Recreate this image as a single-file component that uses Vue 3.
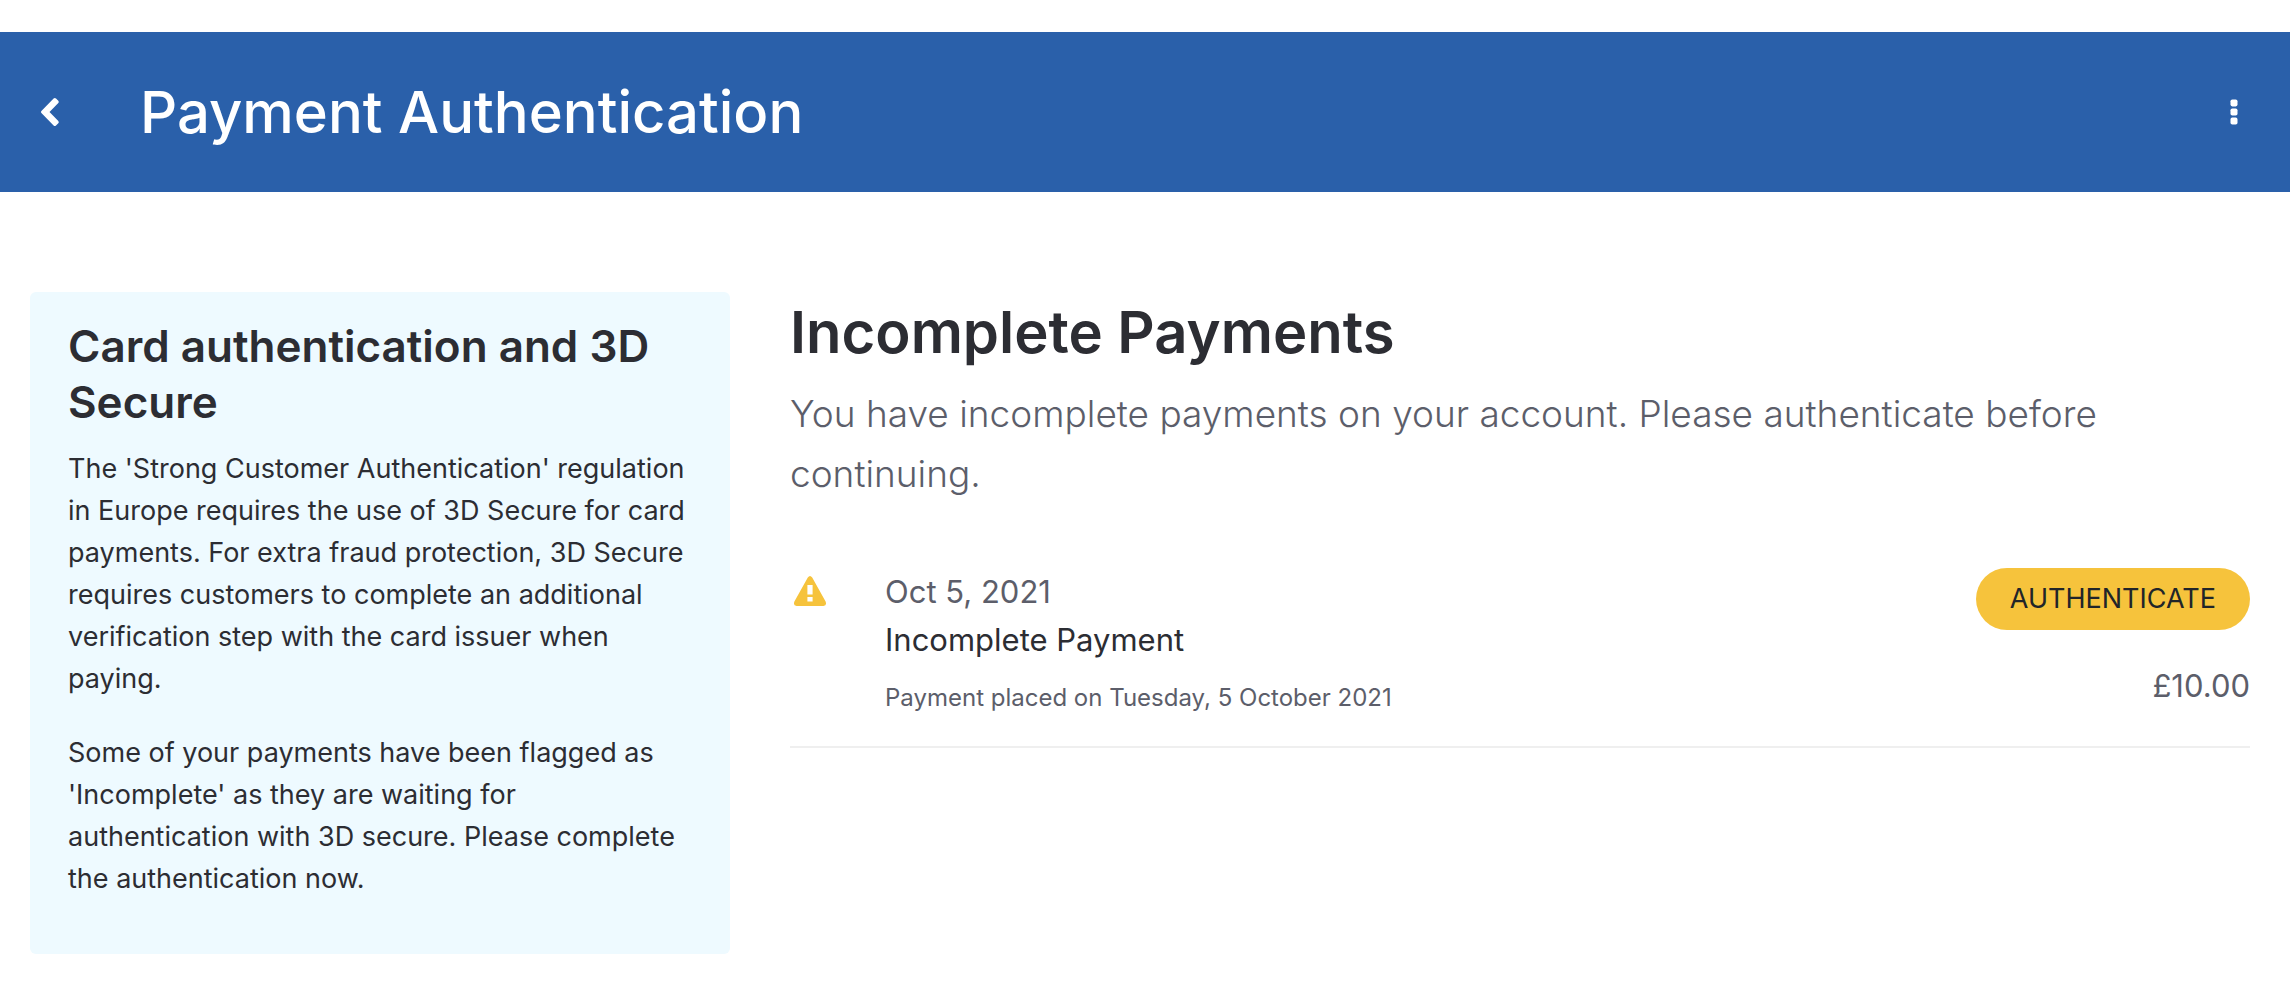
<script setup>
const notes = [
  "The 'Strong Customer Authentication' regulation in Europe requires the use of 3D Secure for card payments. For extra fraud protection, 3D Secure requires customers to complete an additional verification step with the card issuer when paying.",
  "Some of your payments have been flagged as 'Incomplete' as they are waiting for authentication with 3D secure. Please complete the authentication now.",
]

const payments = [
  {
    id: 1,
    date: 'Oct 5, 2021',
    title: 'Incomplete Payment',
    detail: 'Payment placed on Tuesday, 5 October 2021',
    amount: '£10.00',
  },
]
</script>

<template>
  <div class="page">
    <header class="topbar">
      <button class="icon-button back" type="button" aria-label="Back">
        <svg width="20" height="30" viewBox="0 0 20 30" aria-hidden="true">
          <path
            d="M1.4 13.9 L13.6 1.4 Q14.8 0.4 16 1.4 L18.3 3.7 Q19.4 4.9 18.3 6.1 L9.5 15 L18.3 23.9 Q19.4 25.1 18.3 26.3 L16 28.6 Q14.8 29.6 13.6 28.6 L1.4 16.1 Q0.4 15 1.4 13.9 Z"
            fill="currentColor"
          />
        </svg>
      </button>
      <h1 class="topbar-title">Payment Authentication</h1>
      <button class="icon-button more" type="button" aria-label="More options">
        <svg width="8" height="26" viewBox="0 0 8 26" aria-hidden="true">
          <rect x="0.5" y="0.4" width="7" height="7" rx="1.8" fill="currentColor" />
          <rect x="0.5" y="9.5" width="7" height="7" rx="1.8" fill="currentColor" />
          <rect x="0.5" y="18.6" width="7" height="7" rx="1.8" fill="currentColor" />
        </svg>
      </button>
    </header>

    <main class="content">
      <aside class="info">
        <h3 class="info-title">Card authentication and 3D Secure</h3>
        <p v-for="note in notes" :key="note" class="info-text">{{ note }}</p>
      </aside>

      <section class="payments">
        <h2 class="payments-title">Incomplete Payments</h2>
        <p class="lead">
          You have incomplete payments on your account. Please authenticate before continuing.
        </p>
        <ul class="list">
          <li v-for="payment in payments" :key="payment.id" class="item">
            <svg class="warning" width="34" height="30" viewBox="0 0 34 30" aria-hidden="true">
              <path
                fill-rule="evenodd"
                d="M14.8 1.6 Q17 -1.6 19.2 1.6 L32.6 25.4 Q34.2 29.6 30.4 30 H3.6 Q-0.2 29.6 1.4 25.4 Z M14.4 9 V18.4 H19.6 V9 Z M14.4 21 V25.6 H19.6 V21 Z"
                fill="currentColor"
              />
            </svg>
            <div class="details">
              <div class="date">{{ payment.date }}</div>
              <div class="name">{{ payment.title }}</div>
              <div class="placed">{{ payment.detail }}</div>
            </div>
            <div class="actions">
              <button class="authenticate" type="button">AUTHENTICATE</button>
              <div class="amount">{{ payment.amount }}</div>
            </div>
          </li>
        </ul>
      </section>
    </main>
  </div>
</template>

<style>
body {
  background: #ffffff;
}
</style>

<style scoped>
.page {
  padding-top: 32px;
  font-family: Inter, "Liberation Sans", sans-serif;
  color: #2c2d33;
}

h1,
h2,
h3,
p,
ul {
  margin: 0;
  padding: 0;
}

.topbar {
  display: flex;
  align-items: center;
  height: 160px;
  background: #2a60aa;
  color: #ffffff;
}

.icon-button {
  display: flex;
  align-items: center;
  justify-content: center;
  width: 100px;
  height: 100px;
  padding: 0;
  border: 0;
  background: none;
  color: inherit;
  cursor: pointer;
}

.topbar-title {
  flex: 1;
  padding-left: 40px;
  font-size: 58px;
  line-height: 72px;
  font-weight: 500;
}

.more {
  margin-right: 6px;
}

.content {
  display: grid;
  grid-template-columns: 700fr 1460fr;
  column-gap: 60px;
  padding: 100px 40px 36px 30px;
}

.info {
  padding: 26px 36px 22px 38px;
  border-radius: 6px;
  background: #eefaff;
}

.info-title {
  margin-bottom: 18px;
  font-size: 44px;
  line-height: 56px;
  font-weight: 600;
}

.info-text {
  margin-bottom: 32px;
  font-size: 27px;
  line-height: 42px;
  font-weight: 400;
}

.payments-title {
  font-size: 58px;
  line-height: 80px;
  font-weight: 600;
}

.lead {
  margin-top: 12px;
  font-size: 37px;
  line-height: 60px;
  font-weight: 300;
  color: #5c5e6a;
}

.list {
  list-style: none;
}

.item {
  display: flex;
  align-items: flex-start;
  margin-top: 64px;
  padding-bottom: 30px;
  border-bottom: 2px solid #efefef;
}

.warning {
  flex: none;
  margin: 8px 58px 0 3px;
  color: #f6c33c;
}

.details {
  flex: 1;
}

.date,
.name,
.amount {
  font-size: 31px;
  line-height: 48px;
}

.date,
.placed,
.amount {
  color: #5c5e6a;
}

.placed {
  margin-top: 16px;
  font-size: 24px;
  line-height: 36px;
}

.actions {
  display: flex;
  flex-direction: column;
  align-items: flex-end;
}

.authenticate {
  height: 62px;
  padding: 0 34px;
  border: 0;
  border-radius: 31px;
  background: #f6c33c;
  color: #212529;
  font-family: inherit;
  font-size: 27px;
  line-height: 42px;
  font-weight: 400;
  cursor: pointer;
}

.amount {
  margin-top: 32px;
}
</style>
